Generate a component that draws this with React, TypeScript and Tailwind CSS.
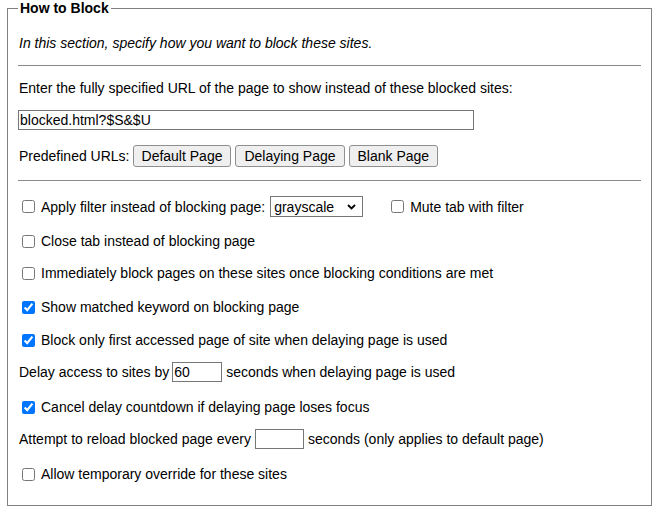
import React from "react";

function Check({ checked, children }: { checked?: boolean; children: React.ReactNode }) {
  return (
    <label className="flex items-center h-[20px]">
      <input
        type="checkbox"
        defaultChecked={checked}
        className="w-[13px] h-[13px] ml-[4px] mr-[6px] shrink-0"
      />
      <span>{children}</span>
    </label>
  );
}

function Btn({ children }: { children: React.ReactNode }) {
  return (
    <button className="h-[22px] px-[8px] bg-[#efefef] border border-[#8f8f8f] rounded-[3px] leading-[16px]">
      {children}
    </button>
  );
}

export default function App() {
  return (
    <div
      className="bg-white text-black text-[14px] leading-[16px] w-[662px] h-[513px] pt-0 pl-[7px] pr-[10px]"
      style={{ fontFamily: '"Liberation Sans", Arial, sans-serif' }}
    >
      <fieldset className="border border-[#808080] px-[10px] pb-[21px]">
        <legend className="px-[2px] font-bold leading-[16px]">How to Block</legend>
        <div className="mt-[17px] h-[20px] flex items-center italic pl-[1px]">
          In this section, specify how you want to block these sites.
        </div>
        <hr className="mt-[12px] border-t border-[#8a8a8a]" />
        <div className="mt-[12px] h-[20px] flex items-center pl-[1px]">
          Enter the fully specified URL of the page to show instead of these blocked sites:
        </div>
        <input
          type="text"
          defaultValue="blocked.html?$S&$U"
          className="mt-[12px] block w-[456px] h-[20px] border border-[#767676] px-[1px] leading-[16px]"
        />
        <div className="mt-[15px] h-[21px] flex items-center gap-[4px] pl-[1px]">
          <span className="mr-[-1px]">Predefined URLs:</span>
          <Btn>Default Page</Btn>
          <Btn>Delaying Page</Btn>
          <Btn>Blank Page</Btn>
        </div>
        <hr className="mt-[14px] border-t border-[#8a8a8a]" />
        <div className="mt-[15px] h-[21px] flex items-center">
          <label className="flex items-center h-[20px]">
            <input type="checkbox" className="w-[13px] h-[13px] ml-[4px] mr-[6px] shrink-0" />
            <span>Apply filter instead of blocking page:</span>
          </label>
          <div className="relative ml-[5px] w-[93px] h-[21px]">
            <select className="appearance-none w-full h-full border border-[#767676] pl-[3px] leading-[16px]">
              <option>grayscale</option>
            </select>
            <svg
              className="absolute right-[7px] top-[8px] pointer-events-none"
              width="9"
              height="6"
              viewBox="0 0 9 6"
            >
              <path d="M1 1 L4.5 4.5 L8 1" fill="none" stroke="#000" strokeWidth="1.8" />
            </svg>
          </div>
          <label className="flex items-center h-[20px] ml-[24px]">
            <input type="checkbox" className="w-[13px] h-[13px] ml-[4px] mr-[6px] shrink-0" />
            <span>Mute tab with filter</span>
          </label>
        </div>
        <div className="mt-[14px]">
          <Check>Close tab instead of blocking page</Check>
        </div>
        <div className="mt-[12px]">
          <Check>Immediately block pages on these sites once blocking conditions are met</Check>
        </div>
        <div className="mt-[14px]">
          <Check checked>Show matched keyword on blocking page</Check>
        </div>
        <div className="mt-[13px]">
          <Check checked>Block only first accessed page of site when delaying page is used</Check>
        </div>
        <div className="mt-[12px] h-[20px] flex items-center pl-[1px]">
          <span>Delay access to sites by</span>
          <input
            type="text"
            defaultValue="60"
            className="ml-[3px] mr-[4px] w-[50px] h-[20px] border border-[#767676] px-[1px] leading-[16px]"
          />
          <span>seconds when delaying page is used</span>
        </div>
        <div className="mt-[15px]">
          <Check checked>Cancel delay countdown if delaying page loses focus</Check>
        </div>
        <div className="mt-[12px] h-[20px] flex items-center pl-[1px]">
          <span>Attempt to reload blocked page every</span>
          <input
            type="text"
            className="ml-[4px] mr-[4px] w-[49px] h-[20px] border border-[#767676] px-[1px] leading-[16px]"
          />
          <span>seconds (only applies to default page)</span>
        </div>
        <div className="mt-[15px]">
          <Check>Allow temporary override for these sites</Check>
        </div>
      </fieldset>
    </div>
  );
}
